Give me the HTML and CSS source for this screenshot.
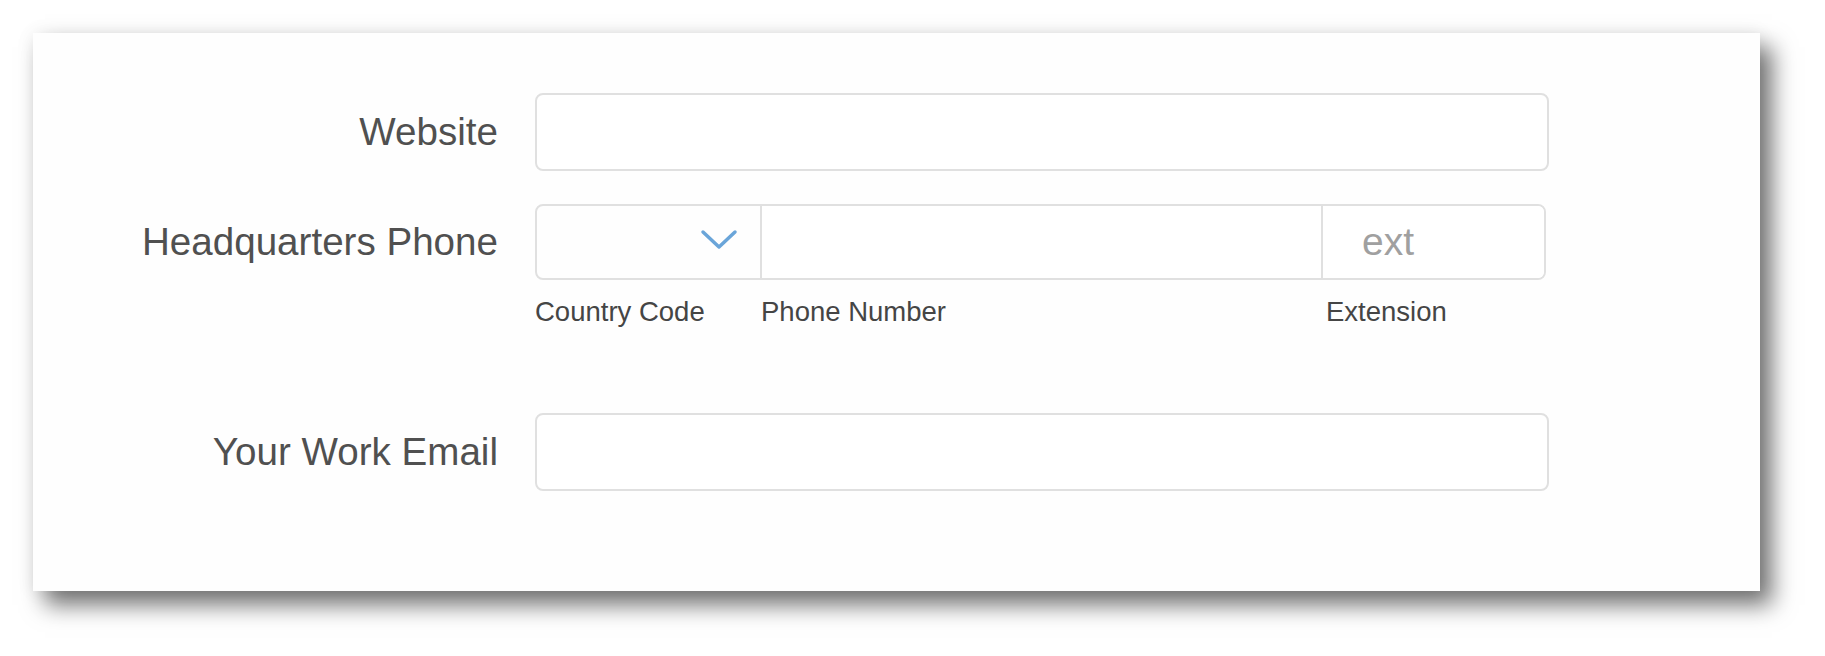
FILE: index.html
```html
<!DOCTYPE html>
<html>
	<head>
		<meta charset="utf-8" />
		<title>Company details</title>
		<link rel="stylesheet" href="styles.css">
	</head>
	<body>
		<div class="card">
			<div class="row">
				<label class="row-label" for="website">Website</label>
				<div class="field">
					<input id="website" class="text-input" type="text" />
				</div>
			</div>
			<div class="row row-phone">
				<label class="row-label" for="phone">Headquarters Phone</label>
				<div class="field">
					<div class="phone-group">
						<div class="country">
							<svg class="chevron" width="38" height="22" viewBox="0 0 38 22">
								<polyline points="3,3 19,18 35,3" fill="none" stroke="#6aa5d9" stroke-width="3.5" stroke-linecap="round" stroke-linejoin="round" />
							</svg>
						</div>
						<input id="phone" class="phone-number" type="text" />
						<input class="ext" type="text" placeholder="ext" />
					</div>
					<div class="sub-labels">
						<div class="sub-country">Country Code</div>
						<div class="sub-phone">Phone Number</div>
						<div class="sub-ext">Extension</div>
					</div>
				</div>
			</div>
			<div class="row row-email">
				<label class="row-label" for="email">Your Work Email</label>
				<div class="field">
					<input id="email" class="text-input" type="text" />
				</div>
			</div>
		</div>
	</body>
</html>
```
FILE: styles.css
```css
html {
	background-color: white;
}

body {
	margin: 0px;
	padding-top: 33px;
	padding-bottom: 65px;
	font-family: "Liberation Sans", Arial, sans-serif;
}

.card {
	box-sizing: border-box;
	width: 1727px;
	height: 558px;
	margin-left: 33px;
	padding-top: 60px;
	background-color: #fefefe;
	box-shadow: 12px 14px 22px rgba(0, 0, 0, 0.55), 0px 0px 18px rgba(0, 0, 0, 0.07);
}

.row {
	display: flex;
	align-items: flex-start;
	gap: 37px;
}

.row-phone {
	margin-top: 33px;
}

.row-email {
	margin-top: 85px;
}

.row-label {
	width: 465px;
	text-align: right;
	font-size: 38.6px;
	line-height: 78px;
	color: #505050;
}

.row-phone .row-label {
	line-height: 76px;
}

.field {
	width: 1014px;
}

.text-input {
	display: block;
	box-sizing: border-box;
	width: 100%;
	height: 78px;
	margin: 0px;
	border: 2px solid #e0e0e0;
	border-radius: 8px;
	background-color: white;
	outline: none;
}

.phone-group {
	box-sizing: border-box;
	display: flex;
	width: 1011px;
	height: 76px;
	border: 2px solid #e0e0e0;
	border-radius: 8px;
	overflow: hidden;
}

.country {
	box-sizing: border-box;
	width: 225px;
	display: flex;
	align-items: center;
	justify-content: flex-end;
	padding-right: 22px;
	border-right: 2px solid #e0e0e0;
}

.chevron {
	display: block;
	margin-top: -4px;
}

.phone-number {
	flex: 1;
	margin: 0px;
	border: none;
	border-right: 2px solid #e0e0e0;
	outline: none;
	background-color: white;
}

.ext {
	box-sizing: border-box;
	width: 221px;
	margin: 0px;
	padding-left: 39px;
	border: none;
	outline: none;
	font-family: "Liberation Sans", Arial, sans-serif;
	font-size: 39px;
	background-color: white;
}

.ext::placeholder {
	color: #a0a0a0;
}

.sub-labels {
	display: flex;
	width: 1011px;
	margin-top: 16px;
	font-size: 27.5px;
	line-height: 32px;
	color: #454545;
}

.sub-country {
	width: 225px;
}

.sub-phone {
	flex: 1;
	padding-left: 1px;
}

.sub-ext {
	width: 220px;
}
```
